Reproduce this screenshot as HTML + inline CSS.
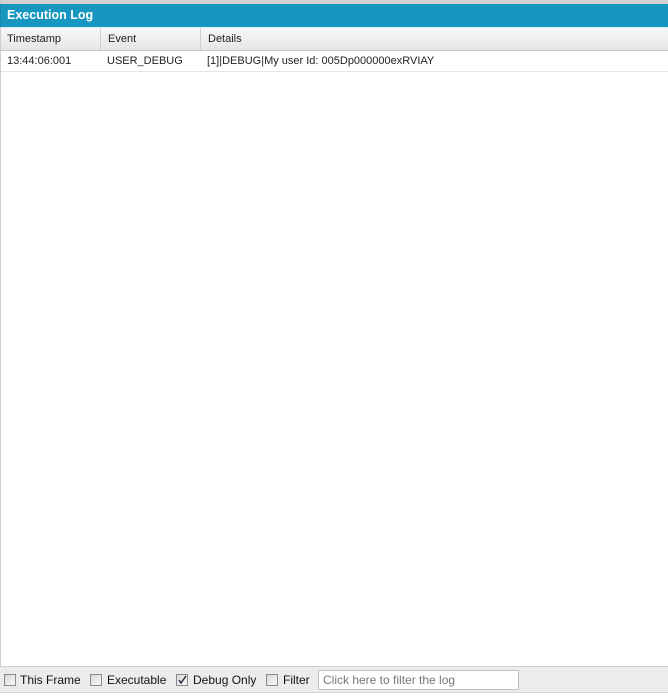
<!DOCTYPE html>
<html><head><style>
*{margin:0;padding:0;box-sizing:border-box}
body{width:668px;height:700px;background:#fff;font-family:"Liberation Sans",Arial,sans-serif;font-size:11px;color:#222;position:relative;overflow:hidden}
.top{position:absolute;left:0;top:0;width:668px;height:4px;background:#d0d0d0}
.title{position:absolute;left:0;top:4px;width:668px;height:23px;background:#1797c0;color:#fff;font-weight:bold;font-size:12.5px;line-height:23px;padding-left:6px;border-left:1px solid #1588ad}
.hdr{position:absolute;left:0;top:27px;width:668px;height:24px;background:linear-gradient(#f7f7f7,#e6e6e6);border-bottom:1px solid #c8c8c8;border-top:1px solid #d8eef5}
.hdr div,.row div{position:absolute;top:0;line-height:22px;padding-left:7px}
.hdr div{border-right:1px solid #d0d0d0;height:22px}
.row{position:absolute;left:0;top:51px;width:668px;height:21px;border-bottom:1px solid #e6e6e6}
.row div{line-height:20px}
.lb{position:absolute;left:0;top:27px;width:1px;height:640px;background:#cfcfcf}
.foot{position:absolute;left:0;top:666px;width:668px;height:26px;background:#ececec;border-top:1px solid #cfcfcf;font-family:"Liberation Sans",Arial,sans-serif;font-size:12px;color:#111}
.cb{position:absolute;top:7px;width:12px;height:12px;border:1px solid #8a8a8a;background:linear-gradient(135deg,#d8d8d8,#fafafa)}
.lab{position:absolute;top:6px;line-height:15px}
.inp{position:absolute;left:318px;top:3px;width:201px;height:20px;border:1px solid #b8c4d0;background:#fff;color:#777;line-height:18px;padding-left:4px}
.bot{position:absolute;left:0;top:692px;width:668px;height:8px;background:#fff;border-top:1px solid #d6d6d6}
</style></head><body>
<div class="top"></div>
<div class="title">Execution Log</div>
<div class="hdr">
<div style="left:0;width:101px">Timestamp</div>
<div style="left:101px;width:100px">Event</div>
<div style="left:201px;border:none">Details</div>
</div>
<div class="row">
<div style="left:0">13:44:06:001</div>
<div style="left:100px">USER_DEBUG</div>
<div style="left:200px">[1]|DEBUG|My user Id: 005Dp000000exRVIAY</div>
</div>
<div class="lb"></div>
<div class="foot">
<div class="cb" style="left:4px"></div><div class="lab" style="left:20px">This Frame</div>
<div class="cb" style="left:90px"></div><div class="lab" style="left:107px">Executable</div>
<div class="cb" style="left:176px"><svg width="10" height="10" style="position:absolute;left:0;top:0"><path d="M2 5 L4 8 L9 1" stroke="#223" stroke-width="1.4" fill="none"/></svg></div><div class="lab" style="left:193px">Debug Only</div>
<div class="cb" style="left:266px"></div><div class="lab" style="left:283px">Filter</div>
<div class="inp">Click here to filter the log</div>
</div>
<div class="bot"></div>
</body></html>
